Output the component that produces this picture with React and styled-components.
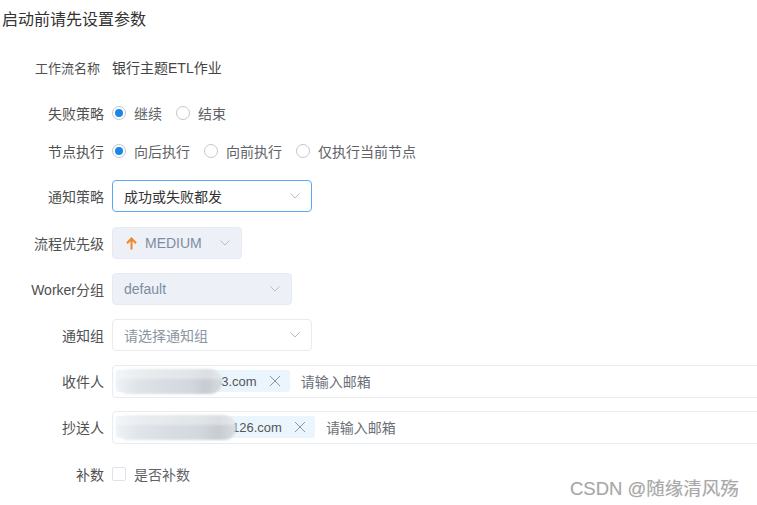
import React from 'react';
import styled, { createGlobalStyle } from 'styled-components';

const GlobalStyle = createGlobalStyle`
  html, body {
    margin: 0;
    padding: 0;
    overflow: hidden;
    background: #fff;
  }
  body {
    font-family: "Liberation Sans", "Noto Sans CJK SC", sans-serif;
    color: #333;
  }
`;

const Page = styled.div`
  position: relative;
  width: 757px;
  height: 505px;
  overflow: hidden;
`;

const Title = styled.div`
  margin: 8px 0 0 2px;
  height: 24px;
  line-height: 24px;
  font-size: 16px;
  color: #333;
`;

const Form = styled.div`
  display: flex;
  flex-direction: column;
`;

const Item = styled.div`
  display: flex;
  align-items: center;
  height: 32px;
  margin-top: ${(p) => p.$mt}px;
`;

const Label = styled.div`
  flex: none;
  width: ${(p) => p.$w || 104}px;
  margin-right: ${(p) => p.$gap || 8}px;
  text-align: right;
  font-size: ${(p) => p.$size || 14}px;
  color: #505050;
  white-space: nowrap;
`;

const Value = styled.div`
  font-size: 14px;
  color: #444;
`;

const RadioGroup = styled.div`
  display: flex;
  align-items: center;
  gap: 14px;
`;

const RadioOption = styled.label`
  display: flex;
  align-items: center;
  gap: 8px;
  font-size: 14px;
  color: #606266;
`;

const RadioDot = styled.span`
  box-sizing: border-box;
  width: 14px;
  height: 14px;
  border-radius: 50%;
  border: 1px solid #c4c7cd;
  background: #fff;
  display: flex;
  align-items: center;
  justify-content: center;
  &::after {
    content: '';
    width: 8px;
    height: 8px;
    border-radius: 50%;
    background: ${(p) => (p.$on ? '#1a87e6' : 'transparent')};
  }
`;

const SelectBox = styled.div`
  box-sizing: border-box;
  display: flex;
  align-items: center;
  width: ${(p) => p.$w}px;
  height: 32px;
  padding: 0 11px 0 ${(p) => p.$pl || 11}px;
  border: 1px solid ${(p) => (p.$focus ? '#5aa8f2' : p.$disabled ? '#e6ebf2' : '#e8ebf0')};
  border-radius: 4px;
  background: ${(p) => (p.$disabled ? '#edf1f7' : '#fff')};
  font-size: 14px;
  color: ${(p) => (p.$placeholder ? '#8c95a3' : p.$disabled ? '#7d8ca3' : '#333')};
`;

const SelectText = styled.span`
  flex: 1;
  display: flex;
  align-items: center;
  gap: 8px;
  white-space: nowrap;
`;

const Chevron = () => (
  <svg width="10" height="6" viewBox="0 0 10 6" fill="none">
    <polyline points="0.5,0.5 5,5 9.5,0.5" stroke="#b8bec8" strokeWidth="1" />
  </svg>
);

const ArrowUp = () => (
  <svg width="11" height="13" viewBox="0 0 11 13" fill="none">
    <path d="M5.5 12.5V1.8 M1 6.2 L5.5 1.5 L10 6.2" stroke="#f0862a" strokeWidth="2" />
  </svg>
);

const TagInput = styled.div`
  box-sizing: border-box;
  display: flex;
  align-items: center;
  gap: 11px;
  width: 700px;
  height: 33px;
  padding: 0 3px;
  border: 1px solid #e8ebf0;
  border-radius: 4px;
  background: #fff;
  flex: none;
`;

const Tag = styled.span`
  display: flex;
  align-items: center;
  height: 22px;
  padding-right: 9px;
  border-radius: 3px;
  background: #ebf5fd;
  font-size: 13px;
  color: #555;
  white-space: nowrap;
`;

const Blur = styled.span`
  flex: none;
  width: ${(p) => p.$w}px;
  height: 25px;
  margin-right: ${(p) => -p.$cover}px;
  border-radius: 12px;
  background:
    linear-gradient(180deg, rgba(255, 255, 255, 0.35) 0 42%, transparent 42%),
    linear-gradient(90deg, #eef2f6 0%, #dfe4e9 20%, #d7dde2 45%, #d2d8dd 70%, #c7ccd2 85%, #d8dde2 100%);
  filter: blur(1.2px);
  position: relative;
  z-index: 1;
`;

const Close = () => (
  <svg width="12" height="12" viewBox="0 0 12 12" style={{ marginLeft: 12 }}>
    <path d="M1 1 L11 11 M11 1 L1 11" stroke="#8f959e" strokeWidth="1" />
  </svg>
);

const Placeholder = styled.span`
  font-size: 14px;
  color: #6a7079;
`;

const Check = styled.span`
  box-sizing: border-box;
  width: 14px;
  height: 14px;
  border: 1px solid #dfe3e9;
  border-radius: 2px;
  background: #fff;
  margin-right: 8px;
`;

const CheckText = styled.span`
  font-size: 14px;
  color: #606266;
`;

const Watermark = styled.div`
  position: absolute;
  left: 570px;
  top: 474px;
  font-size: 18.5px;
  color: #a8a8a8;
  text-shadow: 0 0 1px #ddd;
  white-space: nowrap;
`;

const Radio = ({ on, children }) => (
  <RadioOption>
    <RadioDot $on={on} />
    {children}
  </RadioOption>
);

const EmailTag = ({ blur, cover, text }) => (
  <Tag>
    <Blur $w={blur} $cover={cover} />
    {text}
    <Close />
  </Tag>
);

export default function App() {
  return (
    <Page>
      <GlobalStyle />
      <Title>启动前请先设置参数</Title>
      <Form>
        <Item $mt={19}>
          <Label $w={100} $gap={12} $size={13}>工作流名称</Label>
          <Value>银行主题ETL作业</Value>
        </Item>
        <Item $mt={14}>
          <Label>失败策略</Label>
          <RadioGroup>
            <Radio on>继续</Radio>
            <Radio>结束</Radio>
          </RadioGroup>
        </Item>
        <Item $mt={6}>
          <Label>节点执行</Label>
          <RadioGroup>
            <Radio on>向后执行</Radio>
            <Radio>向前执行</Radio>
            <Radio>仅执行当前节点</Radio>
          </RadioGroup>
        </Item>
        <Item $mt={13}>
          <Label>通知策略</Label>
          <SelectBox $w={200} $focus>
            <SelectText>成功或失败都发</SelectText>
            <Chevron />
          </SelectBox>
        </Item>
        <Item $mt={15}>
          <Label>流程优先级</Label>
          <SelectBox $w={130} $disabled $pl={13}>
            <SelectText>
              <ArrowUp />
              MEDIUM
            </SelectText>
            <Chevron />
          </SelectBox>
        </Item>
        <Item $mt={14}>
          <Label>Worker分组</Label>
          <SelectBox $w={180} $disabled>
            <SelectText>default</SelectText>
            <Chevron />
          </SelectBox>
        </Item>
        <Item $mt={14}>
          <Label>通知组</Label>
          <SelectBox $w={200} $placeholder>
            <SelectText>请选择通知组</SelectText>
            <Chevron />
          </SelectBox>
        </Item>
        <Item $mt={14}>
          <Label>收件人</Label>
          <TagInput>
            <EmailTag blur={106} cover={8} text="63.com" />
            <Placeholder>请输入邮箱</Placeholder>
          </TagInput>
        </Item>
        <Item $mt={14}>
          <Label>抄送人</Label>
          <TagInput>
            <EmailTag blur={120} cover={4} text="126.com" />
            <Placeholder>请输入邮箱</Placeholder>
          </TagInput>
        </Item>
        <Item $mt={15}>
          <Label>补数</Label>
          <Check />
          <CheckText>是否补数</CheckText>
        </Item>
      </Form>
      <Watermark>CSDN @随缘清风殇</Watermark>
    </Page>
  );
}
